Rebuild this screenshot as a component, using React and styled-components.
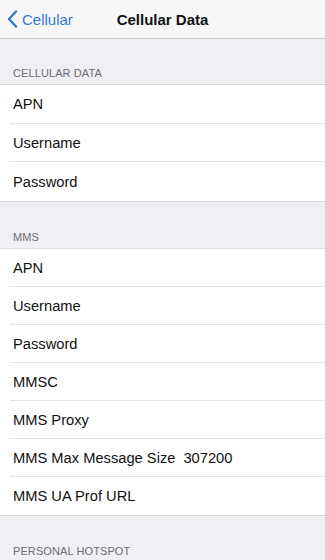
import React from 'react'
import styled, { createGlobalStyle } from 'styled-components'

const GlobalStyle = createGlobalStyle`
  html, body {
    margin: 0;
    padding: 0;
    background: #efeff4;
    font-family: "Liberation Sans", Arial, sans-serif;
    -webkit-font-smoothing: antialiased;
  }
`;

const Screen = styled.div`
  width: 325px;
  height: 560px;
  overflow: hidden;
  background: #efeff4;
`;

const NavBar = styled.div`
  position: relative;
  height: 38px;
  background: #f7f7f8;
  border-bottom: 1px solid #c8c7cc;
  display: flex;
  align-items: center;
  justify-content: center;
`;

const BackButton = styled.div`
  position: absolute;
  left: 7px;
  top: 0;
  height: 38px;
  display: flex;
  align-items: center;
  gap: 4px;
  color: #2f7bd6;
  font-size: 15px;
`;

const Title = styled.div`
  font-size: 15px;
  font-weight: bold;
  color: #111;
`;

const SectionHeader = styled.div`
  height: ${p => p.$height}px;
  box-sizing: border-box;
  padding: 0 13px 5px;
  display: flex;
  align-items: flex-end;
  font-size: 11px;
  color: #6d6d72;
  letter-spacing: 0.1px;
  border-bottom: ${p => (p.$open ? 'none' : '1px solid #dcdce0')};
`;

const Group = styled.div`
  background: #fff;
  padding-left: 10px;
  border-bottom: 1px solid #dcdce0;
`;

const Row = styled.div`
  height: ${p => p.$h}px;
  box-sizing: border-box;
  display: flex;
  align-items: center;
  padding-left: 3px;
  font-size: 14.7px;
  color: #111;
  border-bottom: ${p => (p.$last ? 'none' : '1px solid #e3e3e6')};
`;

const Value = styled.span`
  margin-left: 8px;
`;

const Chevron = () => (
  <svg width="11" height="18" viewBox="0 0 11 18">
    <path d="M9 1.5 L2 9 L9 16.5" fill="none" stroke="#2f7bd6" strokeWidth="2.4" strokeLinecap="round" strokeLinejoin="round" />
  </svg>
);

const cellular = ['APN', 'Username', 'Password'];
const mms = [
  { label: 'APN' },
  { label: 'Username' },
  { label: 'Password' },
  { label: 'MMSC' },
  { label: 'MMS Proxy' },
  { label: 'MMS Max Message Size', value: '307200' },
  { label: 'MMS UA Prof URL' },
];

export default function App() {
  return (
    <Screen>
      <GlobalStyle />
      <NavBar>
        <BackButton>
          <Chevron />
          <span>Cellular</span>
        </BackButton>
        <Title>Cellular Data</Title>
      </NavBar>

      <SectionHeader $height={46}>CELLULAR DATA</SectionHeader>
      <Group>
        {cellular.map((l, i) => (
          <Row key={l} $h={38.7} $last={i === cellular.length - 1}>{l}</Row>
        ))}
      </Group>

      <SectionHeader $height={47}>MMS</SectionHeader>
      <Group>
        {mms.map((r, i) => (
          <Row key={r.label + i} $h={38} $last={i === mms.length - 1}>
            {r.label}
            {r.value && <Value>{r.value}</Value>}
          </Row>
        ))}
      </Group>

      <SectionHeader $height={46} $open>PERSONAL HOTSPOT</SectionHeader>
    </Screen>
  )
}
